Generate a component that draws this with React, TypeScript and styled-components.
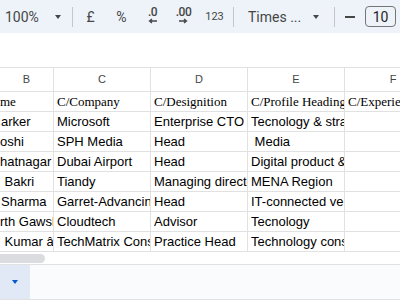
import styled, { createGlobalStyle } from 'styled-components'

const GlobalStyle = createGlobalStyle`
	body {
		margin: 0;
		background: #ffffff;
		font-family: Roboto, 'Liberation Sans', sans-serif;
	}
`

const Page = styled.div`
	width: 400px;
	height: 300px;
	overflow: hidden;
	display: flex;
	flex-direction: column;
	background: #ffffff;
`

const Toolbar = styled.div`
	height: 33px;
	flex: none;
	display: flex;
	align-items: center;
	padding-left: 5px;
	background: #eef2f9;
	color: #444746;
	white-space: nowrap;
`

const ZoomLabel = styled.span`
	font-size: 14px;
	width: 34px;
`

const Caret = styled.span<{ $gap: number; $color?: string }>`
	margin-left: ${(p) => p.$gap}px;
	width: 0;
	height: 0;
	border-left: 3.5px solid transparent;
	border-right: 3.5px solid transparent;
	border-top: 4px solid ${(p) => p.$color || '#444746'};
`

const Divider = styled.span<{ $gap: number; $after: number }>`
	width: 1px;
	height: 20px;
	background: #c7c7c7;
	margin-left: ${(p) => p.$gap}px;
	margin-right: ${(p) => p.$after}px;
`

const ToolButton = styled.span<{ $small?: boolean }>`
	width: 31px;
	display: flex;
	flex-direction: column;
	align-items: center;
	justify-content: center;
	font-size: ${(p) => (p.$small ? '11px' : '14px')};
	line-height: 1;
`

const DecimalText = styled.span`
	font-size: 12px;
	font-weight: 500;
	letter-spacing: -0.5px;
	line-height: 11px;
	margin-top: -2px;
`

const FontLabel = styled.span`
	font-size: 14px;
	width: 65px;
`

const Minus = styled.span`
	width: 10px;
	height: 2px;
	background: #444746;
	margin-left: 10px;
`

const SizeBox = styled.span`
	margin-left: 10px;
	width: 31px;
	height: 21px;
	box-sizing: border-box;
	border: 1px solid #747775;
	border-radius: 4px;
	display: flex;
	align-items: center;
	justify-content: center;
	font-size: 14px;
	color: #1f1f1f;
`

const FormulaGap = styled.div`
	height: 34px;
	flex: none;
	border-bottom: 1px solid #e1e1e1;
`

const Grid = styled.div`
	display: grid;
	grid-template-columns: 54px 97px 97px 97px 97px;
	flex: none;
`

const HeadCell = styled.div`
	height: 24px;
	box-sizing: border-box;
	border-right: 1px solid #e1e1e1;
	border-bottom: 1px solid #e1e1e1;
	text-align: center;
	font: 11px/23px 'Liberation Sans', Arial, sans-serif;
	color: #444746;
	overflow: hidden;
`

const Cell = styled.div<{ $serif?: boolean; $indent?: number }>`
	height: 20px;
	box-sizing: border-box;
	border-right: 1px solid #e1e1e1;
	border-bottom: 1px solid #e1e1e1;
	padding-left: ${(p) => (p.$indent !== undefined ? p.$indent : 3)}px;
	font-size: 13px;
	line-height: 19px;
	font-family: ${(p) =>
		p.$serif
			? "'Liberation Serif', 'Times New Roman', serif"
			: "'Liberation Sans', Arial, sans-serif"};
	color: #000000;
	white-space: pre;
	overflow: hidden;
`

const ScrollTrack = styled.div`
	height: 12px;
	flex: none;
	display: flex;
	align-items: center;
	border-bottom: 1px solid #e1e1e1;
`

const ScrollThumb = styled.div`
	width: 45px;
	height: 9px;
	background: #dadce0;
	border-radius: 0 5px 5px 0;
`

const SheetBar = styled.div`
	flex: 1;
	display: flex;
	background: #f9fbfd;
	border-bottom: 1px solid #e1e1e1;
`

const SheetMenu = styled.div`
	width: 30px;
	display: flex;
	align-items: center;
	justify-content: center;
	background: #e1e9f7;
`

const columns = ['B', 'C', 'D', 'E', 'F']

// first column is scrolled, only the tail of each name shows
const rows: { cells: string[]; indent: number }[] = [
	{ cells: ['me', 'C/Company', 'C/Designition', 'C/Profile Heading', 'C/Experience'], indent: -3 },
	{ cells: ['arker', 'Microsoft', 'Enterprise CTO', 'Tecnology & strategy', ''], indent: 1 },
	{ cells: ['oshi', 'SPH Media', 'Head', ' Media', ''], indent: 0 },
	{ cells: ['hatnagar', 'Dubai Airport', 'Head', 'Digital product & design', ''], indent: -1 },
	{ cells: [' Bakri', 'Tiandy', 'Managing director', 'MENA Region', ''], indent: 1 },
	{ cells: ['Sharma', 'Garret-Advancing Motion', 'Head', 'IT-connected vehicles', ''], indent: 1 },
	{ cells: ['rth Gawskar', 'Cloudtech', 'Advisor', 'Tecnology', ''], indent: -1 },
	{ cells: [' Kumar â€™', 'TechMatrix Consulting', 'Practice Head', 'Technology consulting', ''], indent: 1 },
]

const Arrow = ({ right }: { right?: boolean }) => (
	<svg width="9" height="6" viewBox="0 0 9 6">
		{right ? (
			<path d="M0 3h7M5 1l2.5 2L5 5" stroke="#444746" strokeWidth="1.3" fill="none" />
		) : (
			<path d="M9 3H2M4 1L1.5 3 4 5" stroke="#444746" strokeWidth="1.3" fill="none" />
		)}
	</svg>
)

export default function App() {
	return (
		<>
			<GlobalStyle />
			<Page>
				<Toolbar>
					<ZoomLabel>100%</ZoomLabel>
					<Caret $gap={16} />
					<Divider $gap={11} $after={2} />
					<ToolButton>£</ToolButton>
					<ToolButton>%</ToolButton>
					<ToolButton>
						<DecimalText>.0</DecimalText>
						<Arrow />
					</ToolButton>
					<ToolButton>
						<DecimalText>.00</DecimalText>
						<Arrow right />
					</ToolButton>
					<ToolButton $small>123</ToolButton>
					<Divider $gap={3} $after={14} />
					<FontLabel>Times ...</FontLabel>
					<Caret $gap={0} />
					<Divider $gap={15} $after={0} />
					<Minus />
					<SizeBox>10</SizeBox>
				</Toolbar>
				<FormulaGap />
				<Grid>
					{columns.map((c) => (
						<HeadCell key={c}>{c}</HeadCell>
					))}
					{rows.map((r, i) =>
						r.cells.map((text, j) => (
							<Cell
								key={`${i}-${j}`}
								$serif={i === 0}
								$indent={j === 0 ? r.indent : undefined}
							>
								{text}
							</Cell>
						))
					)}
				</Grid>
				<ScrollTrack>
					<ScrollThumb />
				</ScrollTrack>
				<SheetBar>
					<SheetMenu>
						<Caret $gap={0} $color="#0b57d0" />
					</SheetMenu>
				</SheetBar>
			</Page>
		</>
	)
}
